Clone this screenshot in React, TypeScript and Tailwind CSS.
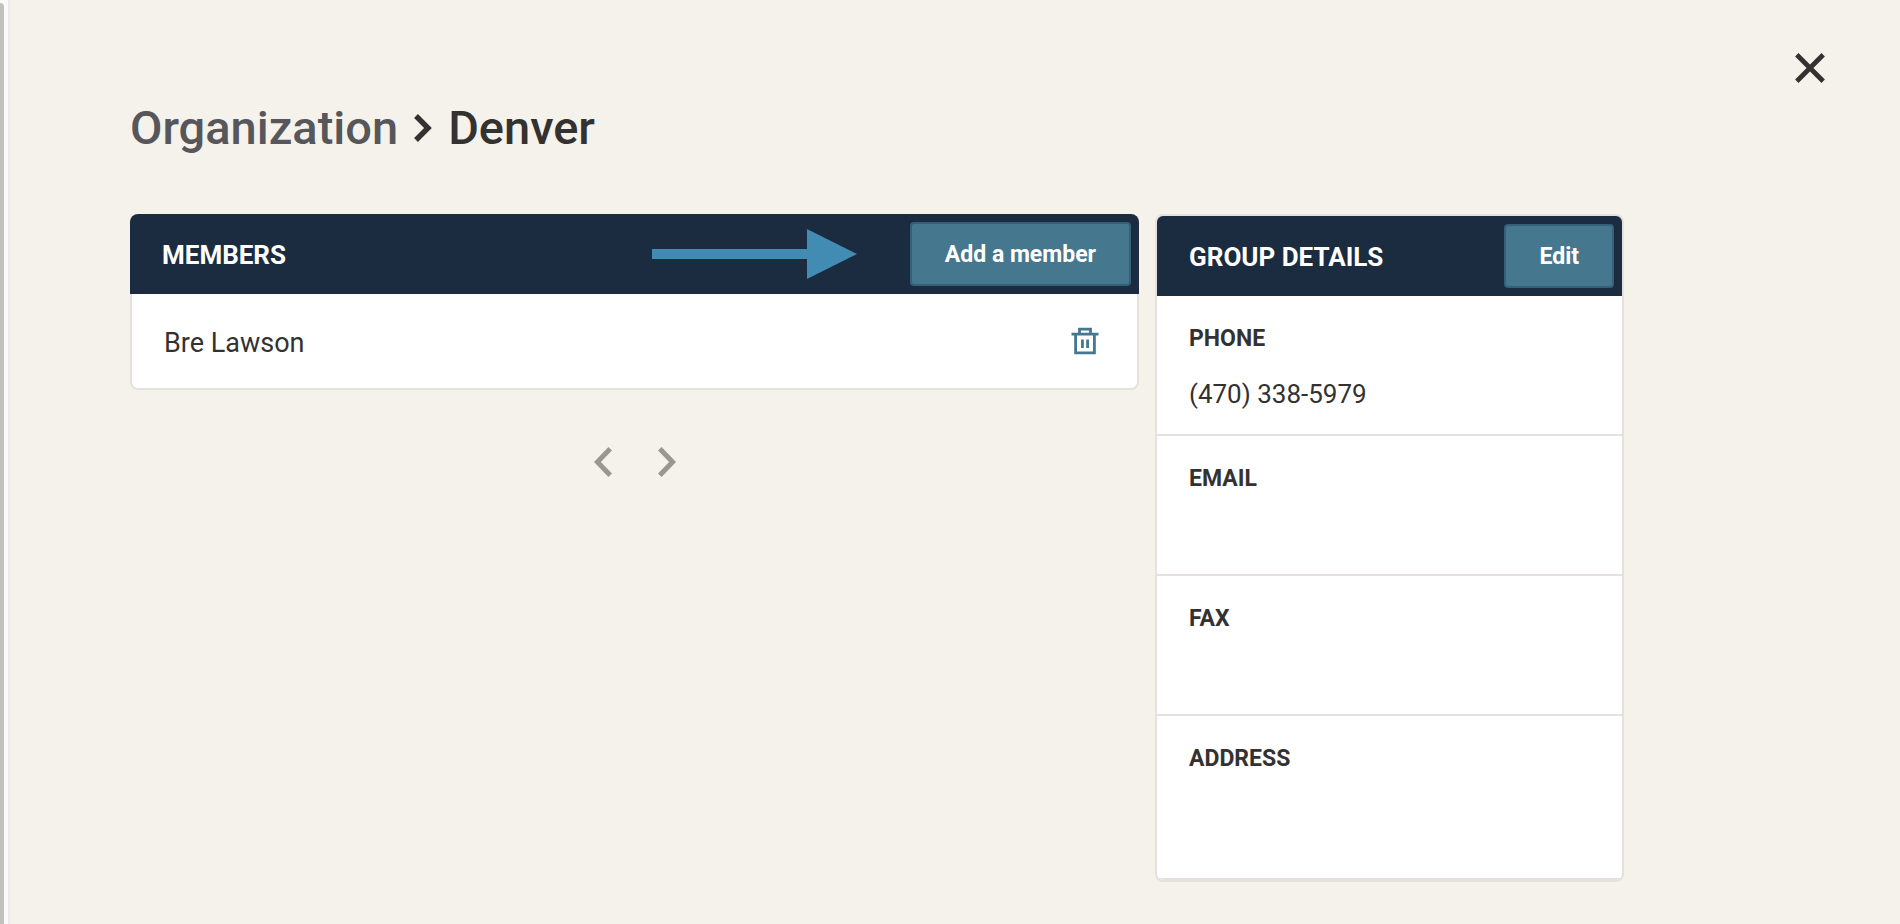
import React from "react";

const members = [{ id: 1, name: "Bre Lawson" }];

const details = [
  { label: "PHONE", value: "(470) 338-5979" },
  { label: "EMAIL", value: "" },
  { label: "FAX", value: "" },
  { label: "ADDRESS", value: "" },
];

function HeaderButton({ children }: { children: React.ReactNode }) {
  return (
    <button
      type="button"
      className="h-16 shrink-0 cursor-pointer whitespace-nowrap rounded border-2 border-[#366079] bg-[#45778e] px-[33px] pt-[2px] text-[23px] font-bold leading-7 text-white"
    >
      {children}
    </button>
  );
}

function Chevron({ direction }: { direction: "left" | "right" }) {
  return (
    <svg width="18" height="30" viewBox="0 0 18 30" fill="none" stroke="currentColor" strokeWidth="5">
      <path d={direction === "left" ? "M16.2 1.8 3.4 15l12.8 13.2" : "M1.8 1.8 14.6 15l-12.8 13.2"} />
    </svg>
  );
}

function TrashIcon() {
  return (
    <svg width="28" height="28" viewBox="0 0 28 28" fill="none" stroke="currentColor" strokeWidth="2.8">
      <path d="M0.5 7.2h27M8.5 7V2.2h11V7M4.6 7v18.8h18.8V7" />
      <path d="M11.4 12.5v8.5M16.6 12.5v8.5" />
    </svg>
  );
}

export default function App() {
  return (
    <div className="flex min-h-screen bg-[#f5f2eb] font-[Roboto,'Open_Sans',sans-serif] text-[#333231]">
      {/* Edge of the page behind the panel */}
      <div className="flex w-[10px] shrink-0 border-r-2 border-[#ebebeb] bg-[#fafafc] pt-[3px]">
        <div className="w-1 rounded-tr bg-[#c1c1c1]" />
      </div>

      <div className="min-w-0 flex-1 pt-[52px]">
        <div className="flex h-8 justify-end pr-[74px]">
          <button type="button" aria-label="Close" className="h-8 w-8 cursor-pointer">
            <svg width="32" height="32" viewBox="0 0 32 32" stroke="currentColor" strokeWidth="4.8">
              <path d="M2.8 2.8l26.4 26.4M29.2 2.8L2.8 29.2" />
            </svg>
          </button>
        </div>

        <main className="pb-10 pl-[120px] pr-[276px]">
          <h1 className="mt-[14px] flex items-center text-[47px] font-medium leading-[60px]">
            <a href="#organization" className="text-[#57565b]">Organization</a>
            <svg className="mx-4 shrink-0" width="18" height="28" viewBox="0 0 18 28" fill="none" stroke="currentColor" strokeWidth="5.4">
              <path d="M2 2l12 12L2 26" />
            </svg>
            <span>Denver</span>
          </h1>

          <div className="mt-14 flex items-start gap-4">
            <section className="min-w-0 flex-1">
              <header className="flex h-20 items-center rounded-t-lg bg-[#1b2b40] pl-8 pr-2">
                <h2 className="flex-1 pt-[2px] text-[26px] font-bold leading-8 text-white">MEMBERS</h2>
                <svg className="mr-[53px] shrink-0" width="205" height="50" viewBox="0 0 205 50" fill="#428bb3">
                  <path d="M0 20h155V0l50 25-50 25V30H0z" />
                </svg>
                <HeaderButton>Add a member</HeaderButton>
              </header>
              <ul className="rounded-b-lg border-2 border-t-0 border-[#e5e2dd] bg-white">
                {members.map((m) => (
                  <li key={m.id} className="flex h-[94px] items-center justify-between pl-8 pr-[38px] text-[27px] leading-8">
                    <span className="pt-[3px]">{m.name}</span>
                    <button type="button" aria-label={`Remove ${m.name}`} className="h-7 w-7 cursor-pointer text-[#45778e]">
                      <TrashIcon />
                    </button>
                  </li>
                ))}
              </ul>

              <nav aria-label="Pagination" className="mt-[57px] flex justify-center gap-[46px] text-[#989792]">
                <button type="button" aria-label="Previous page"><Chevron direction="left" /></button>
                <button type="button" aria-label="Next page"><Chevron direction="right" /></button>
              </nav>
            </section>

            <section className="w-[469px] shrink-0 overflow-hidden rounded-lg border-2 border-[#e5e2dd] bg-white">
              <header className="flex h-20 items-center justify-between bg-[#1b2b40] pl-8 pr-2">
                <h2 className="pt-[2px] text-[26px] font-bold leading-8 text-white">GROUP DETAILS</h2>
                <HeaderButton>Edit</HeaderButton>
              </header>
              <dl>
                {details.map((d) => (
                  <div key={d.label} className="min-h-[140px] border-b-2 border-[#e5e2dd] px-8 pt-[29px] last:min-h-[164px]">
                    <dt className="text-[23px] font-bold leading-7">{d.label}</dt>
                    <dd className="mt-[25px] text-[26px] leading-8">{d.value}</dd>
                  </div>
                ))}
              </dl>
            </section>
          </div>
        </main>
      </div>
    </div>
  );
}
